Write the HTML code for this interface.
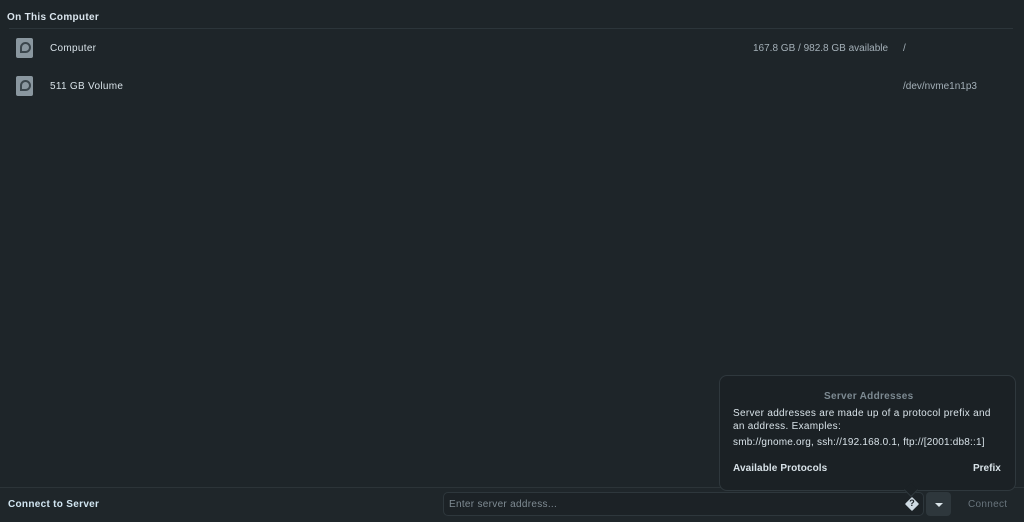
<!DOCTYPE html>
<html><head><style>
*{margin:0;padding:0;box-sizing:border-box}
body{width:1024px;height:522px;background:#1e2529;font-family:"Liberation Sans",sans-serif;color:#d8e2e8;position:relative;overflow:hidden;font-size:10px;letter-spacing:0.3px}
.abs{position:absolute;white-space:nowrap}
.hdd{position:absolute;width:17px;height:20px;background:#8a979f;border-radius:2px}
.hdd::after{content:"";position:absolute;left:4px;top:4px;width:7px;height:7px;border:2px solid #3b464c;border-radius:50%;border-bottom-left-radius:0}
</style></head><body>
<div class="abs" style="left:7px;top:12px;font-weight:bold;font-size:10px;color:#dbe6ee">On This Computer</div>
<div class="abs" style="left:9px;top:28px;width:1004px;height:1px;background:#2c353a"></div>
<div class="hdd" style="left:16px;top:38px"></div>
<div class="abs" style="left:50px;top:43px">Computer</div>
<div class="abs" style="left:753px;top:43px;color:#a4b0b8;letter-spacing:0">167.8 GB / 982.8 GB available</div>
<div class="abs" style="left:903px;top:43px;color:#a4b0b8">/</div>
<div class="hdd" style="left:16px;top:76px"></div>
<div class="abs" style="left:50px;top:81px">511 GB Volume</div>
<div class="abs" style="left:903px;top:81px;color:#a4b0b8;letter-spacing:0">/dev/nvme1n1p3</div>
<div class="abs" style="left:0;top:487px;width:1024px;height:35px;background:#1f262a;border-top:1px solid #2c3438"></div>
<div class="abs" style="left:8px;top:499px;font-weight:bold;color:#d2e6f2">Connect to Server</div>
<div class="abs" style="left:443px;top:492px;width:481px;height:24px;border:1px solid #2e373c;border-radius:5px;background:#1c2226"></div>
<div class="abs" style="left:449px;top:499px;color:#7f8b93">Enter server address...</div>
<div class="abs" style="left:907px;top:499px;width:10px;height:10px;background:#cfdbe3;transform:rotate(45deg);border-radius:1px"></div>
<div class="abs" style="left:907px;top:498px;width:10px;text-align:center;font-size:9px;font-weight:bold;color:#1c2226;letter-spacing:0">?</div>
<div class="abs" style="left:926px;top:492px;width:25px;height:24px;background:#2e373c;border-radius:4px"></div>
<div class="abs" style="left:935px;top:503px;width:0;height:0;border-left:4px solid transparent;border-right:4px solid transparent;border-top:4px solid #dbe5ea"></div>
<div class="abs" style="left:968px;top:499px;color:#68747c">Connect</div>
<div class="abs" style="left:719px;top:375px;width:297px;height:116px;background:#1b2125;border:1px solid #2f383d;border-radius:8px"></div>
<div class="abs" style="left:906px;top:485px;width:10px;height:10px;background:#1b2125;border-right:1px solid #2f383d;border-bottom:1px solid #2f383d;transform:rotate(45deg)"></div>
<div class="abs" style="left:824px;top:391px;font-weight:bold;color:#7d8a92">Server Addresses</div>
<div class="abs" style="left:733px;top:407px;line-height:13px">Server addresses are made up of a protocol prefix and<br>an address. Examples:</div>
<div class="abs" style="left:733px;top:437px;letter-spacing:0.2px">smb://gnome.org, ssh://192.168.0.1, ftp://[2001:db8::1]</div>
<div class="abs" style="left:733px;top:463px;font-weight:bold;letter-spacing:0.1px">Available Protocols</div>
<div class="abs" style="left:973px;top:463px;font-weight:bold;letter-spacing:0">Prefix</div>
</body></html>
